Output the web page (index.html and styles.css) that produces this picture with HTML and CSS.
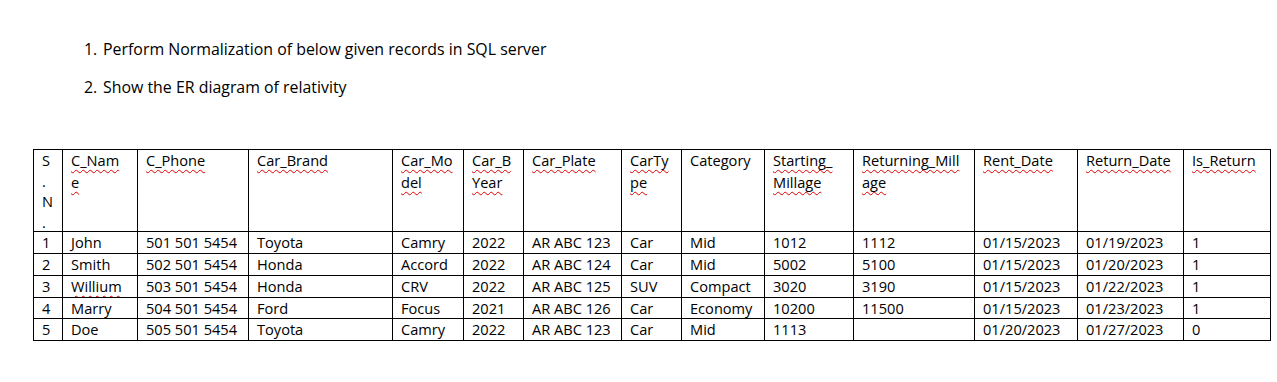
FILE: index.html
```html
<!DOCTYPE html>
<html>
<head>
<meta charset="utf-8">
<link rel="stylesheet" href="styles.css">
</head>
<body>
<div class="tasks">
  <div class="task"><span class="num">1.</span><span>Perform Normalization of below given records in SQL server</span></div>
  <div class="task"><span class="num">2.</span><span>Show the ER diagram of relativity</span></div>
</div>
<table class="records">
  <colgroup>
    <col style="width:29px"><col style="width:75px"><col style="width:111px"><col style="width:144px"><col style="width:71px"><col style="width:60px"><col style="width:98px"><col style="width:60px"><col style="width:83px"><col style="width:89px"><col style="width:121px"><col style="width:103px"><col style="width:106px"><col style="width:87px">
  </colgroup>
  <thead>
    <tr>
      <th><div class="sn">S<br>.<br>N<br>.</div></th>
      <th><span class="sp">C_Nam</span><br><span class="sp">e</span></th>
      <th><span class="sp">C_Phone</span></th>
      <th><span class="sp">Car_Brand</span></th>
      <th><span class="sp">Car_Mo</span><br><span class="sp">del</span></th>
      <th><span class="sp">Car_B</span><br><span class="sp">Year</span></th>
      <th><span class="sp">Car_Plate</span></th>
      <th><span class="sp">CarTy</span><br><span class="sp">pe</span></th>
      <th>Category</th>
      <th><span class="sp">Starting_</span><br><span class="sp">Millage</span></th>
      <th><span class="sp">Returning_Mill</span><br><span class="sp">age</span></th>
      <th><span class="sp">Rent_Date</span></th>
      <th><span class="sp">Return_Date</span></th>
      <th><span class="sp">Is_Return</span></th>
    </tr>
  </thead>
  <tbody>
    <tr><td>1</td><td>John</td><td>501 501 5454</td><td>Toyota</td><td>Camry</td><td>2022</td><td>AR ABC 123</td><td>Car</td><td>Mid</td><td>1012</td><td>1112</td><td>01/15/2023</td><td>01/19/2023</td><td>1</td></tr>
    <tr><td>2</td><td>Smith</td><td>502 501 5454</td><td>Honda</td><td>Accord</td><td>2022</td><td>AR ABC 124</td><td>Car</td><td>Mid</td><td>5002</td><td>5100</td><td>01/15/2023</td><td>01/20/2023</td><td>1</td></tr>
    <tr><td>3</td><td><span class="sp">Willium</span></td><td>503 501 5454</td><td>Honda</td><td>CRV</td><td>2022</td><td>AR ABC 125</td><td>SUV</td><td>Compact</td><td>3020</td><td>3190</td><td>01/15/2023</td><td>01/22/2023</td><td>1</td></tr>
    <tr><td>4</td><td>Marry</td><td>504 501 5454</td><td>Ford</td><td>Focus</td><td>2021</td><td>AR ABC 126</td><td>Car</td><td>Economy</td><td>10200</td><td>11500</td><td>01/15/2023</td><td>01/23/2023</td><td>1</td></tr>
    <tr><td>5</td><td>Doe</td><td>505 501 5454</td><td>Toyota</td><td>Camry</td><td>2022</td><td>AR ABC 123</td><td>Car</td><td>Mid</td><td>1113</td><td></td><td>01/20/2023</td><td>01/27/2023</td><td>0</td></tr>
  </tbody>
</table>
</body>
</html>
```
FILE: styles.css
```css
html, body {
  margin: 0;
  padding: 0;
  background: #fff;
}
body {
  font-family: "Open Sans", Lato, sans-serif;
  font-size: 14.6px;
  color: #000;
}
.tasks {
  padding: 38.5px 0 0 84px;
  font-size: 15.9px;
}
.task {
  display: flex;
  line-height: 21.7px;
  margin-bottom: 16.8px;
  white-space: nowrap;
}
.task:last-child {
  margin-bottom: 0;
}
.num {
  width: 19px;
  flex: none;
}
.records {
  margin: 50.6px 0 0 33px;
  border-collapse: collapse;
  table-layout: fixed;
  width: 1238px;
}
.records th,
.records td {
  border: 1px solid #000;
  padding: 0 0 0 8px;
  text-align: left;
  vertical-align: top;
  white-space: nowrap;
  overflow: hidden;
  font-weight: normal;
}
.records th {
  height: 81px;
  line-height: 21.6px;
}
.records td {
  height: 20.8px;
  line-height: 20.8px;
}
.sn {
  height: 80px;
  line-height: 20.5px;
}
.sp {
  text-decoration: underline wavy #e00000;
  text-decoration-thickness: 1px;
  text-underline-offset: 3px;
  text-decoration-skip-ink: none;
}
```
